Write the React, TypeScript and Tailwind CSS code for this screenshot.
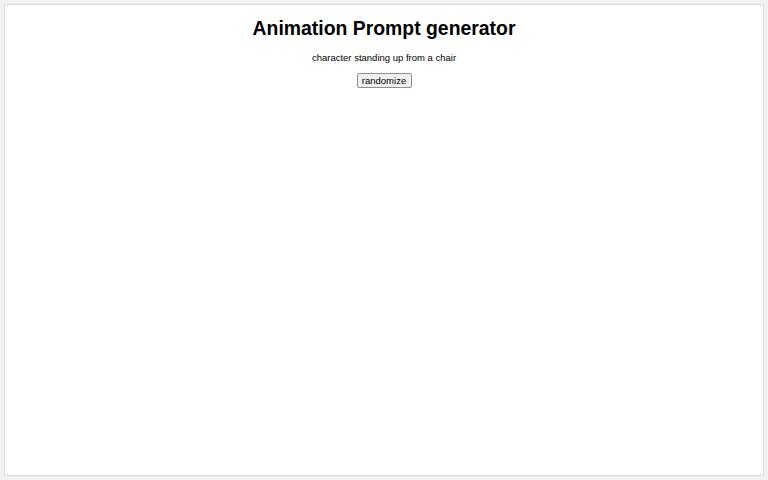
export default function App() {
  return (
    <div className="h-[480px] w-[768px] bg-[#f2f2f2] p-[4px]" style={{ fontFamily: '"Liberation Sans", Arial, sans-serif' }}>
      <div className="flex h-full flex-col items-center border border-[#dcdcdc] bg-white text-black">
        <h1 className="mt-[12px] text-[19.4px] font-bold leading-[22px]">Animation Prompt generator</h1>
        <p className="mt-[13px] text-[9.5px] leading-[11px]">character standing up from a chair</p>
        <button className="mt-[10px] h-[15px] w-[55px] rounded-[2px] border border-[#8f8f8f] bg-[#f0f0f0] text-[9.5px] leading-[11px]">
          randomize
        </button>
      </div>
    </div>
  );
}
